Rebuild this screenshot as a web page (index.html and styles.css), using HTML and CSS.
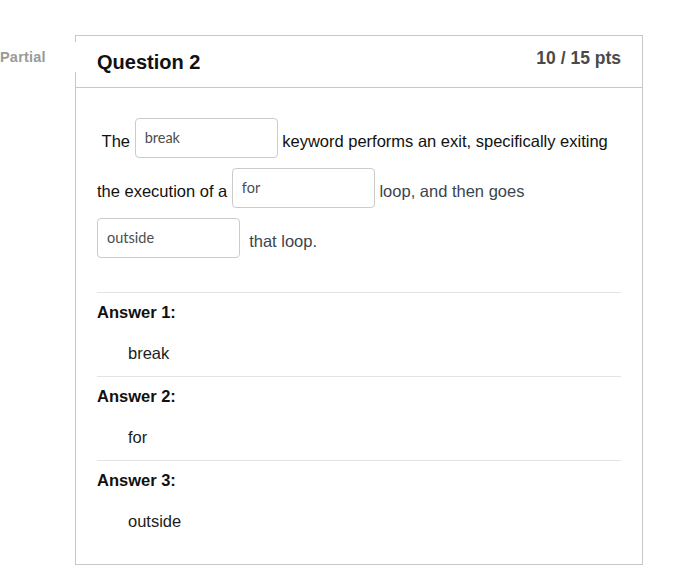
FILE: index.html
```html
<!DOCTYPE html>
<html lang="en">
<head>
<meta charset="utf-8">
<title>Question 2</title>
<link rel="stylesheet" href="styles.css">
</head>
<body>
<div class="page">
  <div class="status">Partial</div>
  <div class="card">
    <div class="card-header">
      <h2 class="q-title">Question 2</h2>
      <div class="pts">10 / 15 pts</div>
    </div>
    <div class="card-body">
      <p class="q-text"><span>&nbsp;The</span> <input class="blank" type="text" value="break" readonly> <span>keyword performs an exit, specifically exiting</span> <span>the execution of a</span> <input class="blank" type="text" value="for" readonly> <span class="soft">loop, and then goes</span> <input class="blank" type="text" value="outside" readonly> &nbsp;<span class="soft">that loop.</span></p>
      <div class="answer">
        <div class="a-label">Answer 1:</div>
        <div class="a-value">break</div>
      </div>
      <div class="answer">
        <div class="a-label">Answer 2:</div>
        <div class="a-value">for</div>
      </div>
      <div class="answer">
        <div class="a-label">Answer 3:</div>
        <div class="a-value">outside</div>
      </div>
    </div>
  </div>
</div>
</body>
</html>
```
FILE: styles.css
```css
html, body {
  margin: 0;
  padding: 0;
  background: #fff;
}

body {
  font-family: "Liberation Sans", Arial, sans-serif;
  color: #1c1c1c;
}

.page {
  display: flex;
  align-items: flex-start;
  padding-top: 35px;
}

.status {
  width: 75px;
  flex: none;
  padding-top: 14px;
  font-size: 14.5px;
  line-height: 16px;
  font-weight: bold;
  color: #9a9a9a;
  letter-spacing: 0.2px;
}

.card {
  position: relative;
  width: 568px;
  box-sizing: border-box;
  border: 1px solid #c8c8c8;
  background: #fff;
}

.card::before {
  content: "";
  position: absolute;
  left: -1px;
  top: 6px;
  width: 1px;
  height: 30px;
  background: #fff;
}

.card-header {
  display: flex;
  justify-content: space-between;
  align-items: flex-start;
  padding: 12px 21px 0;
  box-sizing: border-box;
  height: 52px;
  border-bottom: 1px solid #c8c8c8;
}

.q-title {
  margin: 2px 0 0;
  font-size: 20px;
  line-height: 24px;
  font-weight: bold;
  color: #111;
}

.pts {
  font-size: 17.5px;
  line-height: 20px;
  font-weight: bold;
  color: #4a4a4a;
}

.card-body {
  padding: 28px 21px 20px;
}

.q-text {
  margin: 0 0 26px;
  font-size: 16.5px;
  line-height: 50px;
  color: #111;
}

.soft {
  color: #3a4550;
}

.blank {
  width: 143px;
  height: 40px;
  box-sizing: border-box;
  margin: 0;
  padding: 0 9px;
  border: 1px solid #cbcbcb;
  border-radius: 4px;
  background: #fff;
  font-family: Lato, "Open Sans", sans-serif;
  font-size: 14.5px;
  line-height: normal;
  color: #4d4d4d;
  vertical-align: 4px;
  outline: none;
}

.answer {
  border-top: 1px solid #e3e3e3;
  padding: 9px 0 13px;
}

.a-label {
  font-size: 16.5px;
  line-height: 20px;
  font-weight: bold;
  color: #111;
}

.a-value {
  margin-top: 21px;
  padding-left: 31px;
  font-size: 16.5px;
  line-height: 20px;
  color: #1c1c1c;
}
```
